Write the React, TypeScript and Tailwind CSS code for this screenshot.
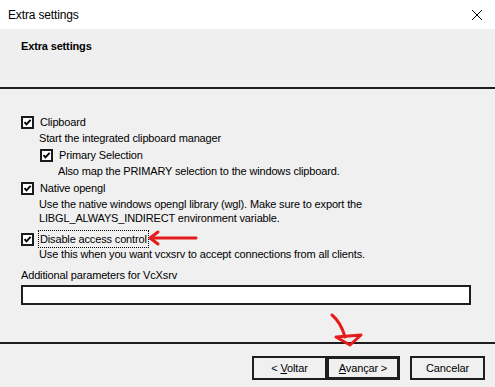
import type { ReactNode } from "react";

function Check() {
  return (
    <span className="relative inline-block h-[13px] w-[13px] shrink-0 border-2 border-[#1b1b1b] bg-white">
      <svg viewBox="0 0 9 9" className="absolute inset-0 h-[9px] w-[9px]">
        <path d="M1.5 4.2 L3.5 6.3 L7.6 1.8" fill="none" stroke="#000" strokeWidth="1.9" />
      </svg>
    </span>
  );
}

function Option({
  label,
  focused,
  children,
}: {
  label: string;
  focused?: boolean;
  children: ReactNode;
}) {
  return (
    <div>
      <div className="flex h-[16px] items-center">
        <Check />
        <span
          className={`ml-[4px] px-[1px] leading-[16px] ${
            focused ? "border border-dotted border-black" : "border border-transparent"
          }`}
        >
          {label}
        </span>
      </div>
      <div className="ml-[18px] leading-[14px]">{children}</div>
    </div>
  );
}

export default function App() {
  return (
    <div
      className="relative flex h-[387px] w-[495px] flex-col overflow-hidden bg-[#f0f0f0] text-[11px] tracking-[-0.15px] text-black"
      style={{ fontFamily: '"Liberation Sans", Arial, sans-serif' }}
    >
      {/* window title */}
      <div className="flex h-[29px] shrink-0 items-center justify-between bg-white pl-[8px] pr-[12px]">
        <span className="text-[12px]">Extra settings</span>
        <svg viewBox="0 0 12 12" className="h-[12px] w-[12px]">
          <path d="M1 1 L11 11 M11 1 L1 11" stroke="#000" strokeWidth="1" />
        </svg>
      </div>

      {/* page header */}
      <div className="h-[58px] shrink-0 bg-[#efefef] pl-[21px] pt-[9px]">
        <span className="text-[11px] font-bold">Extra settings</span>
      </div>
      <div className="h-[2px] shrink-0 bg-[#1e1e1e]" />

      {/* body */}
      <div className="flex flex-1 flex-col pl-[21px] pr-[25px] pt-[25px]">
        <Option label="Clipboard">
          <div className="mt-[1px]">Start the integrated clipboard manager</div>
          <div className="mt-[2px] ml-[1px]">
            <Option label="Primary Selection">
              <div className="mt-[1px]">
                Also map the PRIMARY selection to the windows clipboard.
              </div>
            </Option>
          </div>
        </Option>

        <div className="mt-[2px]">
          <Option label="Native opengl">
            <div className="mt-[1px]">
              Use the native windows opengl library (wgl). Make sure to export the
            </div>
            <div>LIBGL_ALWAYS_INDIRECT environment variable.</div>
          </Option>
        </div>

        <div className="mt-[6px]">
          <Option label="Disable access control" focused>
            Use this when you want vcxsrv to accept connections from all clients.
          </Option>
        </div>

        <div className="mt-[7px] leading-[14px]">Additional parameters for VcXsrv</div>
        <div className="mt-[3px] h-[20px] w-[450px] border-2 border-[#1e1e1e] bg-white" />
      </div>

      <div className="h-[2px] shrink-0 bg-[#1e1e1e]" />

      {/* buttons */}
      <div className="flex h-[43px] shrink-0 items-start pl-[252px] pt-[12px]">
        <button className="h-[24px] w-[75px] border-2 border-[#1e1e1e] bg-[#f0f0f0]">
          &lt; <u>V</u>oltar
        </button>
        <button className="-ml-[1px] h-[24px] w-[74px] border-[3px] border-[#1e1e1e] bg-[#f0f0f0]">
          <u>A</u>vançar &gt;
        </button>
        <button className="ml-[10px] h-[24px] w-[75px] border-2 border-[#1e1e1e] bg-[#f0f0f0]">
          Cancelar
        </button>
      </div>

      {/* red annotation arrows */}
      <svg
        className="pointer-events-none absolute left-[146px] top-[228px]"
        width="52"
        height="20"
        viewBox="0 0 52 20"
      >
        <path d="M50 10 L8 10" stroke="#e61b1b" strokeWidth="3" strokeLinecap="round" />
        <path d="M12 4 L4 10 L12 16" fill="none" stroke="#e61b1b" strokeWidth="3" strokeLinejoin="round" strokeLinecap="round" />
      </svg>
      <svg
        className="pointer-events-none absolute left-[328px] top-[310px]"
        width="40"
        height="40"
        viewBox="0 0 40 40"
      >
        <path d="M4 5 C10 10 14 16 17 27" fill="none" stroke="#e61b1b" strokeWidth="3" strokeLinecap="round" />
        <path d="M8 27 L33 25 L22 35 Z" fill="none" stroke="#e61b1b" strokeWidth="3" strokeLinejoin="round" />
      </svg>
    </div>
  );
}
